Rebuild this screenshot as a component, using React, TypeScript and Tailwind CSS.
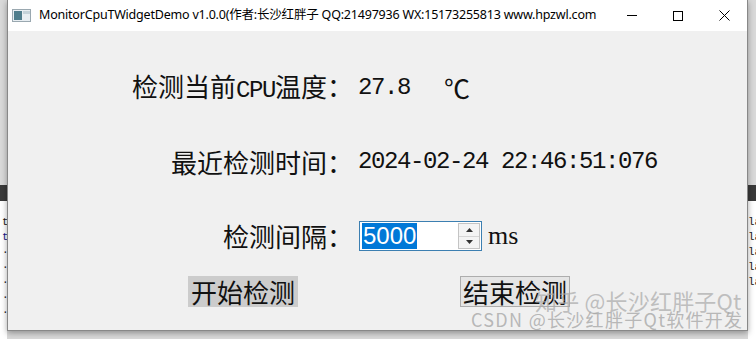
const cjk = "font-['Noto_Sans_CJK_SC',sans-serif]";
const mono = "font-['Liberation_Mono',monospace] text-[24px] tracking-[-1.4px]";

function WinIcon() {
  return (
    <div className="flex h-[13px] w-[19px] border border-[#9aa8b0] bg-[#e8eef2]">
      <div className="m-[1px] w-[8px] bg-[#4f7d8c]" />
      <div className="mt-[1px] h-[3px] flex-1 bg-[#c5d3da]" />
    </div>
  );
}

function TitleBar() {
  return (
    <div className="flex h-[31px] shrink-0 items-center bg-white">
      <div className="ml-[4px] mr-[8px]">
        <WinIcon />
      </div>
      <div className="font-['Noto_Sans','Noto_Sans_CJK_SC',sans-serif] text-[12.5px] tracking-[-0.2px] text-black">
        MonitorCpuTWidgetDemo v1.0.0(作者:长沙红胖子 QQ:21497936 WX:15173255813 www.hpzwl.com
      </div>
      <div className="ml-auto flex h-full items-center">
        <div className="flex h-full w-[46px] items-center justify-center">
          <div className="h-px w-[10px] bg-black" />
        </div>
        <div className="flex h-full w-[46px] items-center justify-center">
          <div className="h-[10px] w-[10px] border border-black" />
        </div>
        <div className="flex h-full w-[46px] items-center justify-center">
          <svg width="11" height="11" viewBox="0 0 11 11" stroke="black" strokeWidth="1">
            <path d="M0.5 0.5L10.5 10.5M10.5 0.5L0.5 10.5" />
          </svg>
        </div>
      </div>
    </div>
  );
}

function Row({ label, children }: { label: React.ReactNode; children: React.ReactNode }) {
  return (
    <div className="flex h-[74px] items-center">
      <div className={`w-[345px] text-right text-[26px] leading-none text-[#111] ${cjk}`}>{label}</div>
      <div className="ml-[5px] flex items-center text-[#111]">{children}</div>
    </div>
  );
}

function SpinBox() {
  return (
    <div className="ml-px flex h-[30px] w-[123px] items-center border border-[#3c7fb1] bg-white">
      <span className="ml-[2px] bg-[#0078d7] px-px font-['Liberation_Sans',sans-serif] text-[24px] leading-[26px] text-white">
        5000
      </span>
      <div className="ml-auto mr-px flex h-[26px] w-[22px] flex-col border border-[#c4c4c4] bg-[#f4f4f4]">
        <div className="flex flex-1 items-center justify-center border-b border-[#d6d6d6]">
          <svg width="7" height="4" viewBox="0 0 7 4"><path d="M3.5 0L7 4H0z" fill="#333" /></svg>
        </div>
        <div className="flex flex-1 items-center justify-center">
          <svg width="7" height="4" viewBox="0 0 7 4"><path d="M0 0H7L3.5 4z" fill="#333" /></svg>
        </div>
      </div>
    </div>
  );
}

function Content() {
  return (
    <div className="relative flex-1 bg-[#f0f0f0] pt-[20px]">
      <Row
        label={
          <>
            检测当前<span className={mono}>CPU</span>温度：
          </>
        }
      >
        <span className={mono}>27.8</span>
        <span className={`ml-[34px] text-[26px] leading-none ${cjk}`}>℃</span>
      </Row>
      <Row label="最近检测时间：">
        <span className={mono}>2024-02-24 22:46:51:076</span>
      </Row>
      <Row label="检测间隔：">
        <SpinBox />
        <span className="ml-[6px] font-['Liberation_Serif',serif] text-[26px] leading-none">ms</span>
      </Row>
      <div className={`mt-[3px] flex text-[26px] leading-none text-[#111] ${cjk}`}>
        <div className="ml-[180px] flex h-[31px] w-[110px] items-center justify-center bg-[#cccccc]">开始检测</div>
        <div className="ml-[162px] flex h-[31px] w-[110px] items-center justify-center border border-[#adadad] bg-[#e5e5e5]">
          结束检测
        </div>
      </div>
      <div className={`pointer-events-none absolute left-[527px] top-[258px] text-[22px] leading-none tracking-[0.2px] text-[#a8a8a8]/70 ${cjk}`}>
        知乎 @长沙红胖子Qt
      </div>
      <div className={`pointer-events-none absolute left-[463px] top-[279px] text-[18px] leading-none tracking-[1.3px] text-[#a8a8a8]/80 ${cjk}`}>
        CSDN @长沙红胖子Qt软件开发
      </div>
    </div>
  );
}

function SideStrip({ right }: { right?: boolean }) {
  return (
    <div className="flex w-full flex-col">
      <div className="h-[185px] bg-[#d9d9d9]" />
      <div className="h-[16px] bg-[#3a3a3a]" />
      <div className={`flex-1 bg-white pt-[14px] font-['Liberation_Mono',monospace] text-[11px] leading-[15px] text-[#222] ${right ? "pl-0" : "pl-[2px]"}`}>
        {right ? (
          <>
            <div>la</div><div>la</div><div>la</div><div>la</div><div>la</div>
          </>
        ) : (
          <>
            <div>t</div><div className="text-[#1a1a8a]">t</div><div>·</div><div>·</div><div>·</div><div>·</div><div>·</div>
          </>
        )}
      </div>
    </div>
  );
}

export default function App() {
  return (
    <div className="flex h-[339px] w-[756px] overflow-hidden bg-[#d9d9d9]">
      <div className="flex w-[7px] shrink-0 overflow-hidden">
        <SideStrip />
      </div>
      <div className="z-10 flex h-[331px] w-[741px] shrink-0 flex-col border border-t-0 border-[#888] shadow-[0_2px_6px_rgba(0,0,0,0.35)]">
        <TitleBar />
        <Content />
      </div>
      <div className="flex w-[8px] shrink-0 overflow-hidden">
        <SideStrip right />
      </div>
    </div>
  );
}
